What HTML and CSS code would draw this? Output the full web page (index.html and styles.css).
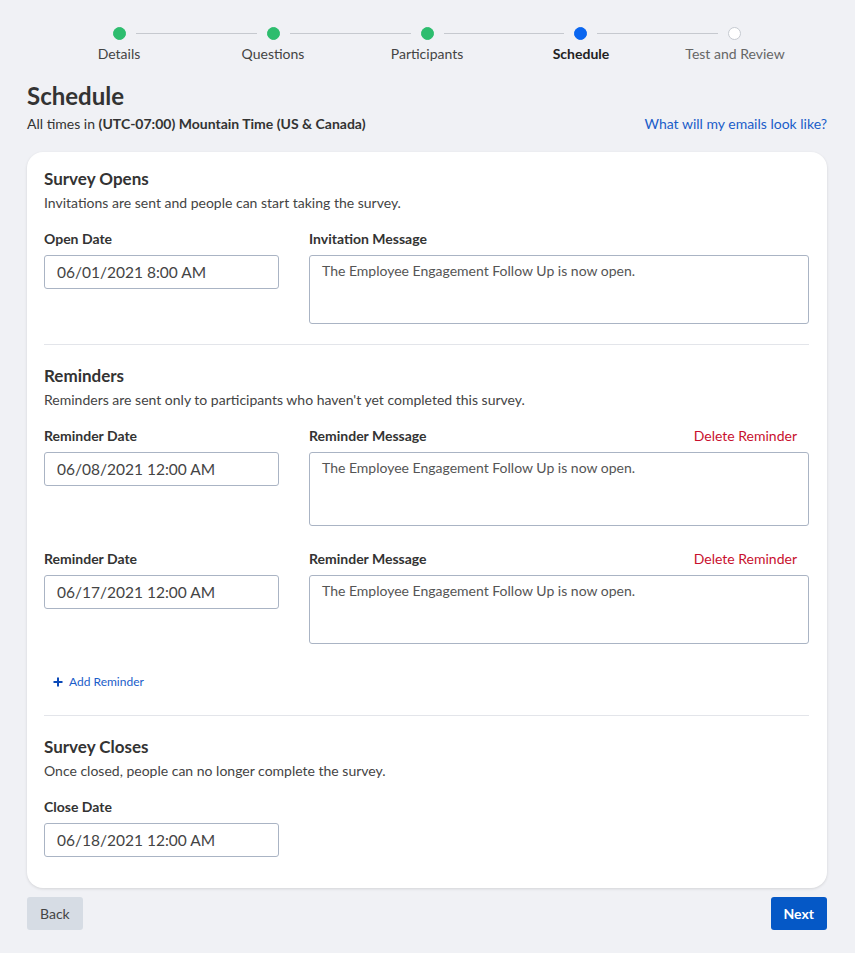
FILE: index.html
```html
<!DOCTYPE html>
<html lang="en">
<head>
    <meta charset="UTF-8">
    <meta name="viewport" content="width=device-width, initial-scale=1.0">
    <title>Schedule</title>
    <link rel="stylesheet" href="styles.css">
</head>
<body>

    <div class="stepper">
        <div class="dots">
            <span class="dot done"></span><span class="line"></span>
            <span class="dot done"></span><span class="line"></span>
            <span class="dot done"></span><span class="line"></span>
            <span class="dot current"></span><span class="line"></span>
            <span class="dot"></span>
        </div>
        <div class="labels">
            <span>Details</span>
            <span>Questions</span>
            <span>Participants</span>
            <span class="active">Schedule</span>
            <span class="todo">Test and Review</span>
        </div>
    </div>

    <h1>Schedule</h1>
    <div class="subhead">
        <p>All times in <b>(UTC-07:00) Mountain Time (US &amp; Canada)</b></p>
        <a href="#">What will my emails look like?</a>
    </div>

    <div class="card">
        <section>
            <h2>Survey Opens</h2>
            <p class="desc">Invitations are sent and people can start taking the survey.</p>
            <div class="row">
                <div class="field">
                    <label>Open Date</label>
                    <input type="text" value="06/01/2021 8:00 AM">
                </div>
                <div class="field">
                    <label>Invitation Message</label>
                    <textarea>The Employee Engagement Follow Up is now open.</textarea>
                </div>
            </div>
        </section>

        <section class="reminders">
            <h2>Reminders</h2>
            <p class="desc">Reminders are sent only to participants who haven't yet completed this survey.</p>
            <div class="row">
                <div class="field">
                    <label>Reminder Date</label>
                    <input type="text" value="06/08/2021 12:00 AM">
                </div>
                <div class="field">
                    <div class="label-row">
                        <label>Reminder Message</label>
                        <a href="#" class="delete">Delete Reminder</a>
                    </div>
                    <textarea class="tall">The Employee Engagement Follow Up is now open.</textarea>
                </div>
            </div>
            <div class="row next">
                <div class="field">
                    <label>Reminder Date</label>
                    <input type="text" value="06/17/2021 12:00 AM">
                </div>
                <div class="field">
                    <div class="label-row">
                        <label>Reminder Message</label>
                        <a href="#" class="delete">Delete Reminder</a>
                    </div>
                    <textarea>The Employee Engagement Follow Up is now open.</textarea>
                </div>
            </div>
            <a href="#" class="add">
                <svg width="10" height="10" viewBox="0 0 10 10"><path d="M5 0.5v9M0.5 5h9" stroke="#0b49b8" stroke-width="2"/></svg>
                Add Reminder
            </a>
        </section>

        <section>
            <h2>Survey Closes</h2>
            <p class="desc">Once closed, people can no longer complete the survey.</p>
            <div class="row">
                <div class="field">
                    <label>Close Date</label>
                    <input type="text" value="06/18/2021 12:00 AM">
                </div>
            </div>
        </section>
    </div>

    <div class="actions">
        <button class="back">Back</button>
        <button class="primary">Next</button>
    </div>

</body>
</html>
```

FILE: styles.css
```css
body {
    margin: 0;
    padding: 0 28px 20px 27px;
    background-color: #f0f1f5;
    font-family: Lato, "Open Sans", sans-serif;
    font-size: 14px;
    color: #333;
}

/* stepper */
.stepper {
    width: 770px;
    margin: 0 auto;
    padding-top: 27px;
}

.dots {
    display: flex;
    align-items: center;
    margin: 0 71px 0 71px;
    height: 13px;
}

.dot {
    width: 13px;
    height: 13px;
    border-radius: 50%;
    box-sizing: border-box;
    border: 1px solid #c6cad1;
    background-color: #fff;
    flex: none;
}

.dot.done {
    background-color: #2dbd6e;
    border-color: #2dbd6e;
}

.dot.current {
    background-color: #0a66f0;
    border-color: #0a66f0;
}

.line {
    flex: 1;
    height: 1px;
    margin: 0 10px;
    background-color: #c6c9cf;
}

.labels {
    display: grid;
    grid-template-columns: repeat(5, 1fr);
    text-align: center;
    margin-top: 5px;
    line-height: 18px;
    color: #444;
}

.labels .active {
    font-weight: bold;
    color: #222;
}

.labels .todo {
    color: #666;
}

/* header */
h1 {
    font-size: 24px;
    line-height: 28px;
    margin: 19px 0 0;
    color: #333;
}

.subhead {
    display: flex;
    justify-content: space-between;
    align-items: center;
    margin-top: 5px;
    line-height: 18px;
}

.subhead p {
    margin: 0;
}

.subhead a {
    color: #1a5dc9;
    text-decoration: none;
}

/* card */
.card {
    background-color: #fff;
    border-radius: 16px;
    box-shadow: 0 1px 3px rgba(0, 0, 0, 0.12);
    margin-top: 19px;
    padding: 17px 18px 31px 17px;
}

section + section {
    border-top: 1px solid #e3e5ea;
    margin-top: 20px;
    padding-top: 21px;
}

.reminders {
    padding-bottom: 6px;
}

h2 {
    font-size: 17px;
    line-height: 20px;
    margin: 0;
    color: #333;
}

.desc {
    margin: 5px 0 0;
    line-height: 18px;
    color: #444;
}

.row {
    display: grid;
    grid-template-columns: 235px 1fr;
    column-gap: 30px;
    margin-top: 18px;
}

.row.next {
    margin-top: 24px;
}

.field label {
    display: block;
    font-weight: bold;
    line-height: 18px;
    color: #333;
}

.label-row {
    display: flex;
    justify-content: space-between;
}

.delete {
    color: #c8102e;
    text-decoration: none;
    line-height: 18px;
    margin-right: 12px;
}

input,
textarea {
    display: block;
    width: 100%;
    box-sizing: border-box;
    margin-top: 7px;
    border: 1px solid #aab4c4;
    border-radius: 3px;
    font-family: inherit;
    color: #444;
}

input {
    height: 34px;
    padding: 0 12px;
    font-size: 15.5px;
}

textarea {
    height: 69px;
    padding: 6px 12px;
    font-size: 14px;
    line-height: 18px;
    resize: none;
    color: #555;
}

textarea.tall {
    height: 74px;
}

.add {
    display: flex;
    width: max-content;
    align-items: center;
    gap: 6px;
    margin: 31px 0 0 9px;
    font-size: 12px;
    line-height: 14px;
    color: #1a5dc9;
    text-decoration: none;
}

/* footer buttons */
.actions {
    display: flex;
    justify-content: space-between;
    margin-top: 9px;
}

button {
    height: 33px;
    padding: 0 13px;
    border: none;
    border-radius: 3px;
    font-family: inherit;
    font-size: 14px;
    cursor: pointer;
}

.back {
    background-color: #d6dce4;
    color: #444;
}

.primary {
    background-color: #0558c6;
    color: #fff;
    font-weight: bold;
}
```
